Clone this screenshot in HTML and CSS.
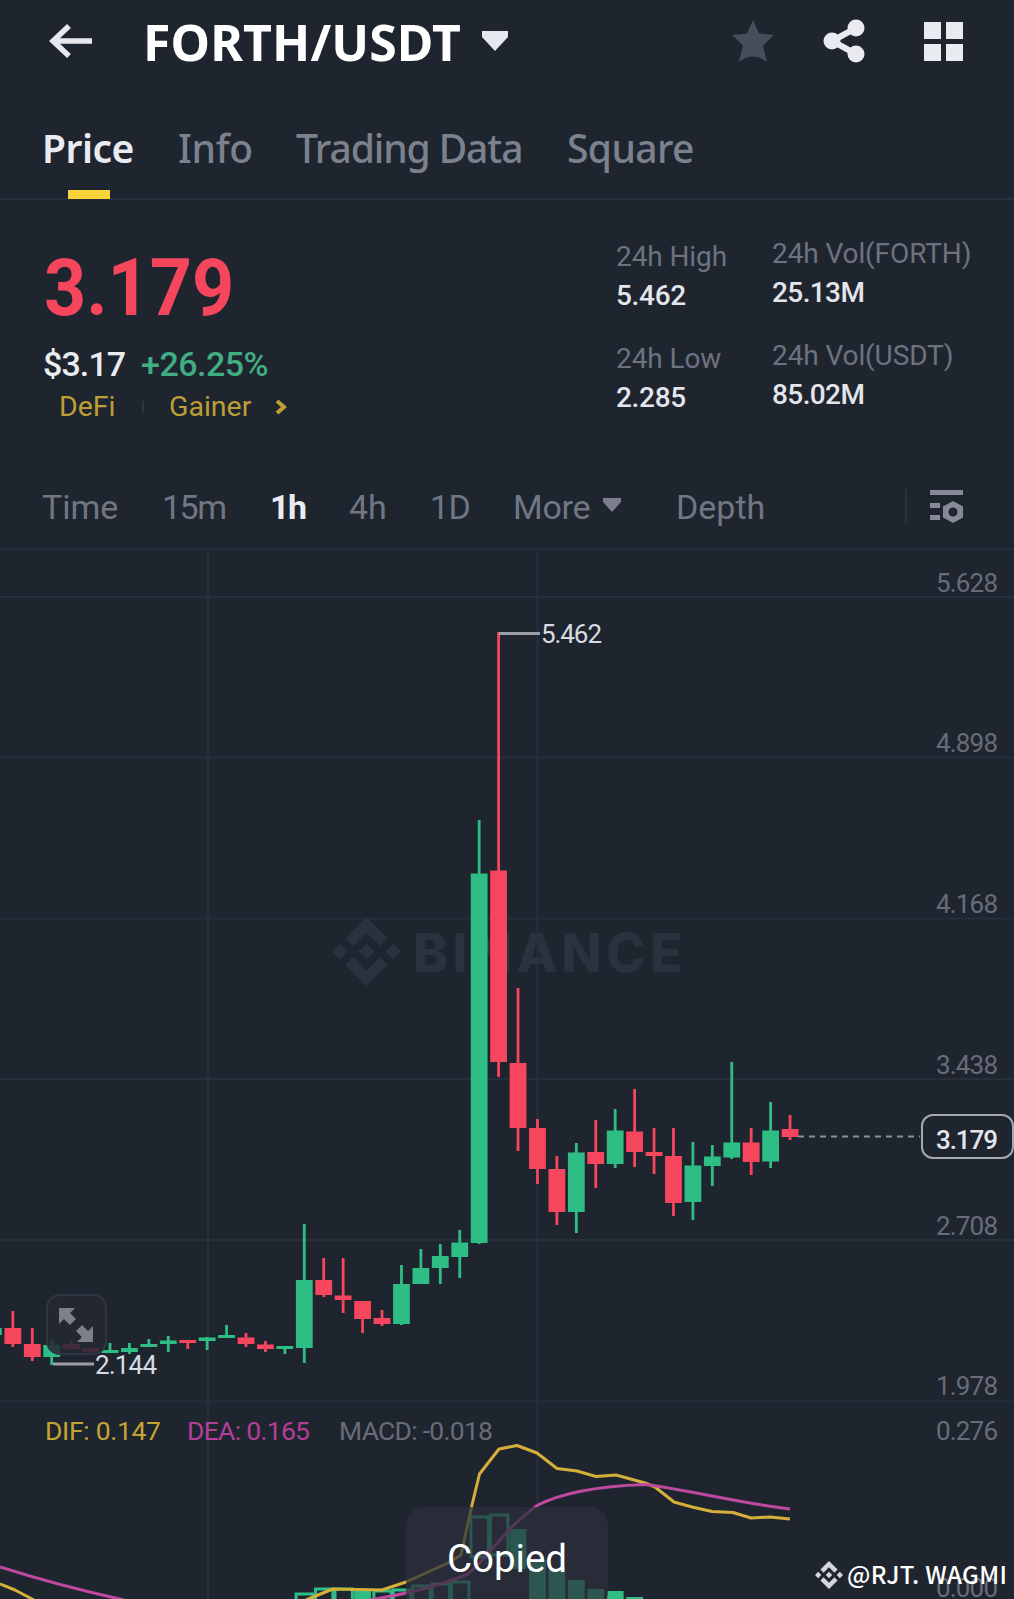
FILE: index.html
```
<!DOCTYPE html>
<html lang="en">
<head>
<meta charset="utf-8">
<title>FORTH/USDT</title>
<link rel="stylesheet" href="styles.css">
</head>
<body>
<svg class="defs" aria-hidden="true">
  <symbol id="bnb" viewBox="0 0 126.6 126.6">
    <path d="M38.7 53.2 63.3 28.6 87.9 53.2 102.2 38.9 63.3 0 24.4 38.9zM0 63.3 14.3 49 28.6 63.3 14.3 77.6zM38.7 73.4 63.3 98 87.9 73.4 102.2 87.7 63.3 126.6 24.4 87.7zM98 63.3 112.3 49 126.6 63.3 112.3 77.6zM77.8 63.3 63.3 48.8 48.8 63.3 63.3 77.8z"/>
  </symbol>
</svg>
<div class="page">
  <header class="header">
    <svg class="back" viewBox="0 0 44 34"><path d="M20 2 4 17 20 32M4 17H43"/></svg>
    <h1 class="pair">FORTH/USDT</h1>
    <svg class="pair-caret" viewBox="0 0 28 22"><path d="M1 1H27V7L14 21 1 7z"/></svg>
    <svg class="star" viewBox="0 0 44 44"><path d="M22 1 28 14.5 43 16 32 26.500 36 43Q29 37.500 22 37.500T8 43L12 26.500 1 16 16 14.500z"/></svg>
    <svg class="share" viewBox="0 0 42 44"><path d="M33 9 9 22 33 35"/><circle cx="33" cy="9" r="8.500"/><circle cx="9" cy="22" r="8.500"/><circle cx="33" cy="35" r="8.500"/></svg>
    <svg class="grid-icon" viewBox="0 0 39 39"><path d="M0 0H17V17H0zM22 0H39V17H22zM0 22H17V39H0zM22 22H39V39H22z"/></svg>
  </header>

  <nav class="tabs">
    <span class="tab tab-price active">Price</span>
    <span class="tab tab-info">Info</span>
    <span class="tab tab-data">Trading Data</span>
    <span class="tab tab-square">Square</span>
  </nav>

  <section class="summary">
    <div class="quote">
      <div class="last">3.179</div>
      <div class="change"><span class="fiat">$3.17</span><span class="pct">+26.25%</span></div>
      <div class="tags"><span class="tag-defi">DeFi</span><i class="tag-sep"></i><span class="tag-gainer">Gainer</span><svg class="chevron" viewBox="0 0 12 16"><path d="M2 2 9 8 2 14"/></svg></div>
    </div>
    <dl class="stats range">
      <dt>24h High</dt><dd>5.462</dd>
      <dt>24h Low</dt><dd>2.285</dd>
    </dl>
    <dl class="stats volume">
      <dt>24h Vol(FORTH)</dt><dd>25.13M</dd>
      <dt>24h Vol(USDT)</dt><dd>85.02M</dd>
    </dl>
  </section>

  <nav class="periods">
    <span class="p-time">Time</span>
    <span class="p-15m">15m</span>
    <span class="p-1h selected">1h</span>
    <span class="p-4h">4h</span>
    <span class="p-1d">1D</span>
    <span class="p-more">More</span>
    <svg class="more-caret" viewBox="0 0 20 16"><path d="M1 1H19V5L10 15 1 5z"/></svg>
    <span class="p-depth">Depth</span>
    <i class="divider"></i>
    <svg class="settings" viewBox="0 0 34 36"><path d="M0 1H33V6H0zM0 14H10V19H0zM0 26H10V31H0z"/><path fill-rule="evenodd" d="M23 12 33 17.500V28.500L23 34 13 28.500V17.500zM23 18.500A4.500 4.500 0 1 0 23 27.500A4.500 4.500 0 1 0 23 18.500z"/></svg>
  </nav>

  <main class="chart">
    <svg class="plot" viewBox="0 549 1014 1050">
      <path class="gridline" d="M0 597H1014M0 757.5H1014M0 918.500H1014M0 1079H1014M0 1240H1014M0 1401.500H1014M208 549V1599M537.500 549V1599"/>
      <g class="watermark">
        <use href="#bnb" x="332" y="917" width="69" height="69"/>
        <text x="413" y="972" textLength="269">BINANCE</text>
      </g>
      <g id="candles"></g>
      <path class="leader" d="M499 633.500H540M53 1364H94"/>
      <g class="callout">
        <text x="541" y="643" textLength="61">5.462</text>
        <text x="95" y="1374" textLength="62">2.144</text>
      </g>
      <path class="last-line" d="M798 1136.500H920"/>
      <g class="axis">
        <text x="936" y="591.500" textLength="62">5.628</text>
        <text x="936" y="752" textLength="62">4.898</text>
        <text x="936" y="912.500" textLength="62">4.168</text>
        <text x="936" y="1074" textLength="62">3.438</text>
        <text x="936" y="1235" textLength="62">2.708</text>
        <text x="936" y="1395" textLength="62">1.978</text>
        <text x="936" y="1440" textLength="62">0.276</text>
        <text x="936" y="1597" textLength="62">0.000</text>
      </g>
      <rect class="last-box" x="922" y="1115" width="91" height="43" rx="11"/>
      <text class="last-text" x="936" y="1149" textLength="62">3.179</text>
      <g class="legend">
        <text class="dif" x="45" y="1440" textLength="116">DIF: 0.147</text>
        <text class="dea" x="187" y="1440" textLength="123">DEA: 0.165</text>
        <text class="macd" x="339" y="1440" textLength="154">MACD: -0.018</text>
      </g>
      <g id="bars"></g>
      <path class="dif-line" d="M0 1584 15 1590 34 1600M306 1600 318 1595 333 1589 382 1590 406 1582 448 1563 461 1555 466 1532 472 1505 479.500 1474 499 1449 517 1445.500 537 1453 557 1468.500 577 1471 596 1476.500 616 1475 645 1483 655 1487 674 1502 692 1507 712 1511.500 733 1512.500 751 1518 770 1517 790 1519"/>
      <path class="dea-line" d="M0 1567Q60 1586 124 1600M370 1600Q430 1590 468 1574C490 1556 505 1528 537 1505.500Q573 1487 645 1484.500 660 1486 712 1496T790 1509"/>
    </svg>
    <button class="expand" aria-label="Full screen"><svg viewBox="0 0 36 36"><path d="M1 1H17L12 6 18 12 12 18 6 12 1 17zM35 35H19L24 30 18 24 24 18 30 24 35 19z"/></svg></button>
    <div class="toast">Copied</div>
    <div class="credit"><svg><use href="#bnb"/></svg><span>@RJT. WAGMI</span></div>
  </main>
</div>
<script src="chart.js"></script>
</body>
</html>
```
FILE: styles.css
```
* { box-sizing: border-box; }
body {
  margin: 0;
  background: #1f252f;
  color: #eaecef;
  font-family: Roboto, "Liberation Sans", sans-serif;
}
.defs { position: absolute; width: 0; height: 0; }
svg { display: block; flex: none; }
span { white-space: nowrap; }
.page { width: 1014px; height: 1599px; overflow: hidden; display: flex; flex-direction: column; }

.header { height: 84px; display: flex; align-items: center; padding: 0 51px 2px 49px; }
.back { width: 44px; height: 34px; fill: none; stroke: #e6e8ee; stroke-width: 5.5; }
.pair { margin: 2px 0 0 50px; width: 326px; font: 700 50px/60px "Noto Sans", sans-serif; color: #fff; letter-spacing: .1px; }
.pair-caret { width: 28px; height: 22px; margin-left: 12px; fill: #e6e8ee; }
.star { width: 44px; height: 44px; margin-left: auto; fill: #474d59; }
.share { width: 42px; height: 44px; margin-left: 48px; fill: #e9ebf1; }
.share path { fill: none; stroke: #e9ebf1; stroke-width: 6; }
.grid-icon { width: 39px; height: 39px; margin-left: 59px; fill: #e9ebf1; }

.tabs { height: 116px; display: flex; padding-left: 42px; border-bottom: 2px solid #2a303b; }
.tab { position: relative; height: 116px; padding-top: 37px; font: 500 39px/54px "Noto Sans", sans-serif; letter-spacing: -1.1px; color: #7c818e; }
.tab-price { width: 136px; letter-spacing: -.1px; font-weight: 600; letter-spacing: -.5px; }
.tab-info { width: 118px; letter-spacing: -.3px; }
.tab-data { width: 271px; }
.tab-square { letter-spacing: -.6px; }
.tab.active { color: #e9ebf1; }
.tab.active::after { content: ""; position: absolute; left: 26px; bottom: 1px; width: 42px; height: 9px; background: #f8d33a; }

.summary { height: 263px; display: flex; padding-left: 44px; }
.quote { width: 572px; padding-top: 47px; }
.last { height: 82px; font-size: 80px; line-height: 82px; font-weight: 700; color: #f6465d; transform: scaleX(.92); transform-origin: left; }
.change { display: flex; height: 46px; margin-top: 12px; line-height: 46px; font-size: 34px; font-weight: 500; }
.fiat { width: 97px; letter-spacing: -.9px; margin-left: -1px; }
.pct { margin-left: 1px; color: #3fae83; letter-spacing: -.5px; }
.tags { display: flex; align-items: center; height: 40px; margin-top: 0; padding-left: 15px; font-size: 28.5px; line-height: 40px; color: #bd9f36; }
.tag-defi { width: 83px; }
.tag-sep { width: 2px; height: 12px; background: #30343e; }
.tag-gainer { width: 106px; margin-left: 25px; }
.chevron { width: 12px; height: 16px; fill: none; stroke: #bd9f36; stroke-width: 4; }
.stats { margin: 0; font-size: 28px; line-height: 40px; white-space: nowrap; }
.stats dt { color: #6d727f; letter-spacing: -.1px; }
.stats dd { margin: -1px 0 23px; font-weight: 500; color: #e3e5ea; letter-spacing: -.3px; }
.range { width: 156px; padding-top: 37px; }
.volume { padding-top: 33.5px; }
.volume dd { letter-spacing: -.6px; }

.periods { height: 87px; display: flex; align-items: center; padding: 3px 0 0 42px; border-bottom: 2px solid #282e39; font-size: 34px; color: #717683; line-height: 44px; }
.p-time { width: 120px; }
.p-15m { width: 108px; letter-spacing: -1.5px; }
.p-1h { width: 79px; letter-spacing: -1.5px; }
.p-4h { width: 81px; }
.p-1d { width: 83px; letter-spacing: -.7px; }
.p-more { width: 89px; letter-spacing: -.3px; }
.p-depth { width: 100px; margin-left: 54px; }
.selected { color: #eaecef; font-weight: 700; }
.more-caret { width: 20px; height: 16px; fill: #7a7f8b; margin-top: -4px; }
.divider { width: 2px; height: 34px; background: #2d333e; margin: -3px 0 0 129px; }
.settings { width: 34px; height: 36px; margin-left: 23px; fill: #858a96; }

.chart { position: relative; height: 1050px; margin-top: -1px; }
.plot { width: 1014px; height: 1050px; }
.gridline { fill: none; stroke: #292f3a; stroke-width: 2; }
.watermark { fill: #2b313d; font: 800 53px Inter, sans-serif; }
.up { fill: #2ebd85; }
.down { fill: #f6465d; }
.bar-hollow { fill: none; stroke: #2ebd85; stroke-width: 3; }
.leader { stroke: #9b9fa9; stroke-width: 3; }
.callout { fill: #d8dbe2; font-size: 26px; }
.last-line { stroke: #8b909b; stroke-width: 2; stroke-dasharray: 6 5; }
.axis { fill: #676c78; font-size: 26px; }
.last-box { fill: #1f252f; stroke: #a4a8b2; stroke-width: 2; }
.last-text { fill: #e3e5ea; font-size: 26px; font-weight: 500; }
.legend { font-size: 26.5px; }
.dif { fill: #c4a534; }
.dea { fill: #b23f98; }
.macd { fill: #676c78; }
.dif-line, .dea-line { fill: none; stroke: #d4b03a; stroke-width: 3; stroke-linejoin: round; }
.dea-line { stroke: #bd4a9f; }

.expand { position: absolute; left: 46px; top: 745px; width: 61px; height: 61px; padding: 11px 10px; border: 2px solid #303641; border-radius: 14px; background: rgba(35, 40, 51, .85); }
.expand svg { width: 36px; height: 36px; fill: #7c808b; }
.toast { position: absolute; left: 406px; top: 958px; width: 202px; height: 104px; border-radius: 18px; background: rgba(43, 47, 59, .72); color: #fff; font-size: 38.5px; line-height: 103px; text-align: center; }
.credit { position: absolute; left: 815px; top: 1012px; display: flex; align-items: center; height: 28px; color: #fff; font: 500 24px/28px "Noto Sans CJK SC", sans-serif; }
.credit svg { width: 28px; height: 28px; margin-right: 4px; fill: #d3d6de; }
.credit span { margin-top: -2px; letter-spacing: .35px; }
```
FILE: chart.js
```
const NS = "http://www.w3.org/2000/svg";
const FIRST = 304.3, STEP = 19.43, BODY = 16.8;

// [slot, direction, body top, body bottom, wick top, wick bottom]
const candles = [
  [-16, 1, 1328, 1335, 1328, 1335],
  [-15, 0, 1328, 1344, 1311, 1347], [-14, 0, 1344, 1357, 1328, 1361],
  [-13, 1, 1345, 1357, 1340, 1365], [-12, 0, 1344, 1349, 1341, 1350],
  [-11, 0, 1348, 1352, 1347, 1353], [-10, 1, 1350, 1353, 1343, 1353],
  [-9, 1, 1348, 1352, 1343, 1354], [-8, 1, 1344, 1347, 1339, 1347],
  [-7, 1, 1340.5, 1344, 1336, 1352], [-6, 0, 1340, 1343, 1340, 1349],
  [-5, 1, 1337.5, 1341, 1337, 1350], [-4, 1, 1335, 1338, 1325, 1338],
  [-3, 0, 1337.5, 1344, 1333, 1347], [-2, 0, 1344.5, 1349, 1341, 1352],
  [-1, 1, 1346, 1349, 1346, 1354], [0, 1, 1280, 1348, 1224, 1363],
  [1, 0, 1280, 1295, 1258, 1297], [2, 0, 1295.5, 1300, 1258, 1313],
  [3, 0, 1301, 1319, 1301, 1333], [4, 0, 1318, 1324, 1310, 1326],
  [5, 1, 1284, 1324, 1265, 1325], [6, 1, 1268, 1284, 1249, 1284],
  [7, 1, 1256, 1268, 1244, 1284], [8, 1, 1242.5, 1257, 1230, 1278],
  [9, 1, 873.5, 1243, 820, 1244], [10, 0, 870.5, 1062, 632, 1077],
  [11, 0, 1063, 1128, 988, 1151], [12, 0, 1128, 1169, 1119, 1184],
  [13, 0, 1169, 1212, 1156, 1225], [14, 1, 1152.5, 1212, 1143, 1233],
  [15, 0, 1152, 1164, 1120, 1188], [16, 1, 1130.5, 1164, 1109, 1168],
  [17, 0, 1131.5, 1152, 1089, 1167], [18, 0, 1152, 1156, 1128, 1174],
  [19, 0, 1156, 1203, 1128, 1216], [20, 1, 1165.5, 1202, 1142, 1220],
  [21, 1, 1156.5, 1166, 1145, 1186], [22, 1, 1142.5, 1157.5, 1062, 1159],
  [23, 0, 1142.5, 1162, 1128, 1175], [24, 1, 1130.5, 1161.5, 1102, 1168],
  [25, 0, 1129, 1137, 1115, 1140]
];

// [slot, top, hollow]
const bars = [
  [0, 1594, 1], [1, 1589, 1], [2, 1589, 1], [3, 1591, 0], [4, 1591, 1],
  [5, 1590, 1], [6, 1586, 1], [7, 1584, 1], [8, 1582, 1], [9, 1517, 1],
  [10, 1515, 1], [11, 1529, 0], [12, 1560, 0], [13, 1568, 0],
  [14, 1580, 0], [15, 1589, 0], [16, 1591, 0], [17, 1597, 0]
];

function rect(parent, cls, x, y, w, h) {
  const r = document.createElementNS(NS, "rect");
  Object.entries({ class: cls, x, y, width: w, height: h })
    .forEach(([k, v]) => r.setAttribute(k, v));
  parent.append(r);
}

const candleLayer = document.getElementById("candles");
for (const [slot, up, top, bottom, high, low] of candles) {
  const x = FIRST + slot * STEP;
  const cls = up ? "up" : "down";
  rect(candleLayer, cls, x - 1.4, high, 2.8, low - high);
  rect(candleLayer, cls, x - BODY / 2, top, BODY, bottom - top);
}

const barLayer = document.getElementById("bars");
for (const [slot, top, hollow] of bars) {
  const x = FIRST + slot * STEP;
  if (hollow) rect(barLayer, "bar-hollow", x - 8.2, top, 17.4, 40);
  else rect(barLayer, "up", x - BODY / 2, top, BODY, 40);
}
```
